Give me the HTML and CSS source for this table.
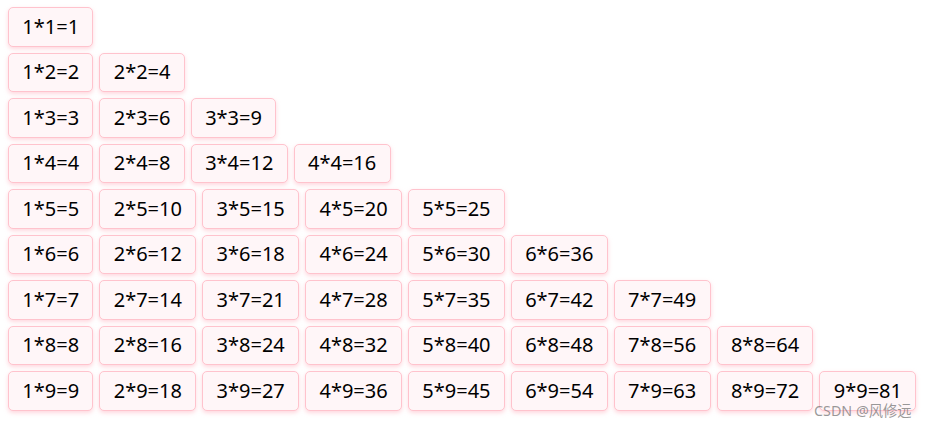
FILE: index.html
```html
<!DOCTYPE html>
<html lang="zh">
<head>
<meta charset="utf-8">
<title>九九乘法表</title>
<link rel="stylesheet" href="styles.css">
</head>
<body>
<div class="table">
  <div class="row"><span class="cell">1*1=1</span></div>
  <div class="row"><span class="cell">1*2=2</span><span class="cell">2*2=4</span></div>
  <div class="row"><span class="cell">1*3=3</span><span class="cell">2*3=6</span><span class="cell">3*3=9</span></div>
  <div class="row"><span class="cell">1*4=4</span><span class="cell">2*4=8</span><span class="cell">3*4=12</span><span class="cell">4*4=16</span></div>
  <div class="row"><span class="cell">1*5=5</span><span class="cell">2*5=10</span><span class="cell">3*5=15</span><span class="cell">4*5=20</span><span class="cell">5*5=25</span></div>
  <div class="row"><span class="cell">1*6=6</span><span class="cell">2*6=12</span><span class="cell">3*6=18</span><span class="cell">4*6=24</span><span class="cell">5*6=30</span><span class="cell">6*6=36</span></div>
  <div class="row"><span class="cell">1*7=7</span><span class="cell">2*7=14</span><span class="cell">3*7=21</span><span class="cell">4*7=28</span><span class="cell">5*7=35</span><span class="cell">6*7=42</span><span class="cell">7*7=49</span></div>
  <div class="row"><span class="cell">1*8=8</span><span class="cell">2*8=16</span><span class="cell">3*8=24</span><span class="cell">4*8=32</span><span class="cell">5*8=40</span><span class="cell">6*8=48</span><span class="cell">7*8=56</span><span class="cell">8*8=64</span></div>
  <div class="row"><span class="cell">1*9=9</span><span class="cell">2*9=18</span><span class="cell">3*9=27</span><span class="cell">4*9=36</span><span class="cell">5*9=45</span><span class="cell">6*9=54</span><span class="cell">7*9=63</span><span class="cell">8*9=72</span><span class="cell">9*9=81</span></div>
</div>
<div class="watermark">CSDN @风修远</div>
</body>
</html>
```
FILE: styles.css
```css
html, body {
  margin: 0;
  padding: 0;
  background: #ffffff;
}
body {
  position: relative;
  width: 929px;
  height: 429px;
  overflow: hidden;
  font-family: "Noto Sans", "Noto Sans CJK SC", sans-serif;
}
.table {
  display: flex;
  flex-direction: column;
  gap: 6px;
  padding: 7px 8px;
}
.row {
  display: flex;
  gap: 6px;
}
.cell {
  display: block;
  box-sizing: border-box;
  height: 39.5px;
  padding: 5.75px 13.32px;
  font-size: 20px;
  line-height: 26px;
  color: #000;
  background: #fff6f8;
  border: 1px solid #ffc3cd;
  border-radius: 5px;
  box-shadow: 0 2px 4px rgba(255, 182, 195, 0.55);
  white-space: nowrap;
}
.watermark {
  position: absolute;
  left: 814px;
  top: 401px;
  font-family: "Noto Sans", "Noto Sans CJK SC", sans-serif;
  font-size: 14.3px;
  line-height: 19px;
  color: rgba(120, 120, 120, 0.75);
  white-space: nowrap;
}
```
